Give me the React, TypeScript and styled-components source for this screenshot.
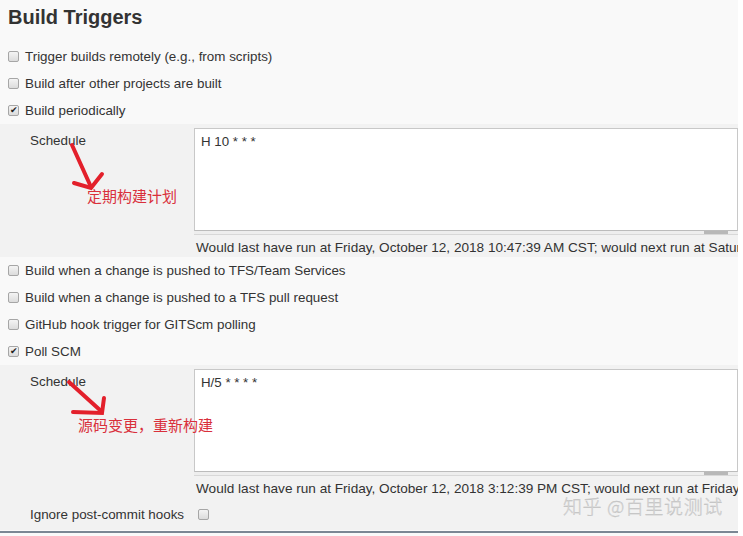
import React from "react"
import styled, { createGlobalStyle } from "styled-components"

const GlobalStyle = createGlobalStyle`
  html, body {
    margin: 0;
    padding: 0;
    background: #ffffff;
  }
  body {
    font-family: "Liberation Sans", Arial, sans-serif;
    color: #333;
  }
`

/**
 * Page
 */
const Page = styled.div`
  position: relative;
  width: 738px;
  height: 536px;
  overflow: hidden;
  background: #f9f9f9;
`
Page.displayName = "Page"

const Title = styled.h2`
  margin: 0;
  padding: 5px 0 0 8px;
  height: 43px;
  box-sizing: border-box;
  font-size: 20px;
  font-weight: bold;
  color: #333;
  line-height: 24px;
`
Title.displayName = "Title"

const Row = styled.label`
  display: flex;
  align-items: center;
  gap: 6px;
  height: 27px;
  padding-left: 8px;
  font-size: 13.4px;
  color: #333;
`
Row.displayName = "Row"

type BoxProps = { $checked?: boolean }
const Box = styled.span<BoxProps>`
  display: inline-flex;
  align-items: center;
  justify-content: center;
  width: 9px;
  height: 9px;
  border: 1px solid #a6a6a6;
  border-radius: 2px;
  background: linear-gradient(#f4f4f4, #dcdcdc);
  font-size: 9px;
  line-height: 9px;
  color: #222;
  flex: none;
`
Box.displayName = "Box"

function Check(props: { checked?: boolean }) {
  return <Box $checked={props.checked}>{props.checked ? "✔" : ""}</Box>
}

/**
 * Nested config block
 */
const Section = styled.div`
  display: grid;
  grid-template-columns: 164px 1fr;
  padding: 4px 0 0 30px;
  background: #f2f2f2;
  font-size: 13.4px;
`
Section.displayName = "Section"

const FieldLabel = styled.div`
  padding-top: 4px;
  line-height: 17px;
  color: #333;
`
FieldLabel.displayName = "FieldLabel"

const Editor = styled.div`
  display: flex;
  flex-direction: column;
  width: 544px;
`
Editor.displayName = "Editor"

const Area = styled.textarea`
  box-sizing: border-box;
  width: 544px;
  height: 103px;
  margin: 0;
  padding: 4px 6px;
  border: 1px solid #c8c8c8;
  border-bottom-color: #bcbcbc;
  background: #fff;
  resize: none;
  font-family: "Liberation Sans", Arial, sans-serif;
  font-size: 13.3px;
  line-height: 17px;
  color: #333;
  outline: none;
`
Area.displayName = "Area"

const Handle = styled.div`
  position: relative;
  height: 3px;
  border-bottom: 1px solid #d8d8d8;
  background: #eeeeee;
  &::after {
    content: "";
    position: absolute;
    right: 10px;
    top: 0;
    width: 24px;
    height: 3px;
    background: #b8b8b8;
  }
`
Handle.displayName = "Handle"

const Desc = styled.div`
  grid-column: 2;
  padding: 4px 0 0 2px;
  height: 22px;
  box-sizing: border-box;
  white-space: nowrap;
  font-size: 13.6px;
  line-height: 17px;
  color: #333;
`
Desc.displayName = "Desc"

const InlineRow = styled.div`
  grid-column: 1 / span 2;
  display: flex;
  align-items: center;
  gap: 14px;
  height: 32px;
  color: #333;
`
InlineRow.displayName = "InlineRow"

const BottomRule = styled.div`
  height: 2px;
  margin-top: 1px;
  background: #7b8794;
`
BottomRule.displayName = "BottomRule"

/**
 * Red hand-drawn notes and the watermark
 */
type NoteProps = { $x: number; $y: number }
const Note = styled.div<NoteProps>`
  position: absolute;
  left: ${(p) => p.$x}px;
  top: ${(p) => p.$y}px;
  font-family: "Noto Sans CJK SC", sans-serif;
  font-size: 15px;
  line-height: 18px;
  color: #d9303b;
  white-space: nowrap;
`
Note.displayName = "Note"

const Ink = styled.svg`
  position: absolute;
  left: 0;
  top: 0;
  pointer-events: none;
`
Ink.displayName = "Ink"

const Watermark = styled.div`
  position: absolute;
  left: 563px;
  top: 494px;
  font-family: "Noto Sans CJK SC", sans-serif;
  font-size: 19px;
  font-weight: 300;
  line-height: 24px;
  letter-spacing: 0.6px;
  color: #dadada;
  -webkit-text-stroke: 0.3px #b9b9b9;
  white-space: nowrap;
`
Watermark.displayName = "Watermark"

const triggers1 = [
  { text: "Trigger builds remotely (e.g., from scripts)" },
  { text: "Build after other projects are built" },
  { text: "Build periodically", checked: true },
]

const triggers2 = [
  { text: "Build when a change is pushed to TFS/Team Services" },
  { text: "Build when a change is pushed to a TFS pull request" },
  { text: "GitHub hook trigger for GITScm polling" },
  { text: "Poll SCM", checked: true },
]

function Schedule(props: { value: string; desc: string; children?: React.ReactNode }) {
  return (
    <Section>
      <FieldLabel>Schedule</FieldLabel>
      <Editor>
        <Area readOnly value={props.value} />
        <Handle />
      </Editor>
      <Desc>{props.desc}</Desc>
      {props.children}
    </Section>
  )
}

export default function App() {
  return (
    <Page>
      <GlobalStyle />
      <Title>Build Triggers</Title>
      {triggers1.map((t) => (
        <Row key={t.text}>
          <Check checked={t.checked} />
          {t.text}
        </Row>
      ))}
      <Schedule
        value="H 10 * * *"
        desc="Would last have run at Friday, October 12, 2018 10:47:39 AM CST; would next run at Saturday, October 13, 2018 10:47:39 AM CST."
      />
      {triggers2.map((t) => (
        <Row key={t.text}>
          <Check checked={t.checked} />
          {t.text}
        </Row>
      ))}
      <Schedule
        value="H/5 * * * *"
        desc="Would last have run at Friday, October 12, 2018 3:12:39 PM CST; would next run at Friday, October 12, 2018 3:17:39 PM CST."
      >
        <InlineRow>
          Ignore post-commit hooks
          <Check />
        </InlineRow>
      </Schedule>
      <BottomRule />

      <Ink width="743" height="536" viewBox="0 0 743 536">
        <g stroke="#e3202b" strokeWidth="4" strokeLinecap="round" fill="none">
          <path d="M72 145 L91 187" />
          <path d="M74 183 L91 188 L102 174" />
          <path d="M69 382 L101 411" />
          <path d="M73 412 L102 413 L104 398" />
        </g>
      </Ink>
      <Note $x={87} $y={187}>定期构建计划</Note>
      <Note $x={78} $y={416}>源码变更，重新构建</Note>
      <Watermark>知乎 @百里说测试</Watermark>
    </Page>
  )
}
